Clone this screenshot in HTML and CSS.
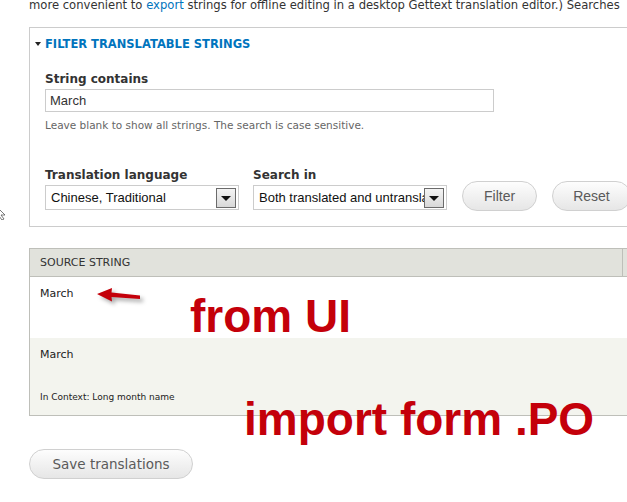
FILE: index.html
```html
<!DOCTYPE html>
<html lang="en">
<head>
    <meta charset="UTF-8">
    <title>Translate interface</title>
    <link rel="stylesheet" href="styles.css">
</head>
<body>
    <div class="page">
        <p class="intro">more convenient to <a href="#">export</a> strings for offline editing in a desktop Gettext translation editor.) Searches</p>

        <div class="filter">
            <div class="legend"><span class="caret"></span>Filter translatable strings</div>

            <div class="field">
                <label>String contains</label>
                <input class="text" type="text" value="March">
                <div class="desc">Leave blank to show all strings. The search is case sensitive.</div>
            </div>

            <div class="row">
                <div class="field">
                    <label>Translation language</label>
                    <div class="select"><span>Chinese, Traditional</span><i></i></div>
                </div>
                <div class="field">
                    <label>Search in</label>
                    <div class="select"><span>Both translated and untranslated strings</span><i></i></div>
                </div>
                <button class="btn">Filter</button>
                <button class="btn">Reset</button>
            </div>
        </div>

        <table class="strings">
            <thead>
                <tr><th>Source string</th><th></th></tr>
            </thead>
            <tbody>
                <tr class="odd"><td>March</td><td></td></tr>
                <tr class="even"><td>March<div class="context">In Context: Long month name</div></td><td></td></tr>
            </tbody>
        </table>

        <button class="btn save">Save translations</button>

        <!-- annotations drawn over the screenshot -->
        <svg class="arrow" width="60" height="22" viewBox="0 0 60 22">
            <path d="M3 6 L18 0 L17.5 4.5 L46 7.5 L46 11 L17.5 9 L18 13.5 Z" fill="#c4000a"/>
        </svg>
        <div class="note note-ui">from UI</div>
        <div class="note note-po">import form .PO</div>

        <svg class="cursor" width="8" height="16" viewBox="0 0 8 16">
            <path d="M-6 0 L5 11 L1 11 L4 15 L2 16 L-1 12 L-6 15 Z" fill="#fff" stroke="#555" stroke-width="0.8"/>
        </svg>
    </div>
</body>
</html>
```

FILE: styles.css
```css
body {
    margin: 0;
    background: #fff;
    overflow: hidden;
    font-family: "DejaVu Sans", Verdana, sans-serif;
    font-size: 11px;
    color: #333;
}
.page {
    position: relative;
    width: 660px;
    height: 502px;
    padding-left: 29px;
}
.intro {
    margin: -4px 0 0;
    line-height: 18px;
    white-space: nowrap;
    font-size: 11.6px;
    color: #333;
}
.intro a {
    color: #0074bd;
    text-decoration: none;
}
.filter {
    margin-top: 13px;
    border: 1px solid #ccc;
    padding: 9px 0 16px 15px;
}
.legend {
    margin-left: -11px;
    line-height: 14px;
    font-weight: bold;
    font-size: 11.5px;
    color: #0074bd;
    text-transform: uppercase;
}
.caret {
    display: inline-block;
    width: 0;
    height: 0;
    border-left: 3px solid transparent;
    border-right: 3px solid transparent;
    border-top: 4px solid #222;
    margin: 0 4px 2px 1px;
    vertical-align: middle;
}
.field {
    display: flex;
    flex-direction: column;
}
.filter > .field {
    margin-top: 21px;
}
label {
    font-weight: bold;
    font-size: 12px;
    line-height: 14px;
    color: #333;
    margin-bottom: 3px;
}
.text {
    box-sizing: border-box;
    width: 449px;
    height: 23px;
    margin: 0;
    border: 1px solid #ccc;
    padding: 2px 4px;
    font-family: "Liberation Sans", Arial, sans-serif;
    font-size: 13px;
    color: #333;
}
.desc {
    margin-top: 6px;
    line-height: 14px;
    font-size: 10.5px;
    color: #666;
}
.row {
    display: flex;
    align-items: flex-end;
    margin-top: 36px;
}
.row .field {
    margin-right: 14px;
}
.select {
    box-sizing: border-box;
    width: 194px;
    height: 25px;
    border: 1px solid #ccc;
    display: flex;
    align-items: center;
    padding-left: 5px;
    font-family: "Liberation Sans", Arial, sans-serif;
    font-size: 13px;
    color: #111;
    overflow: hidden;
}
.select span {
    flex: 1;
    white-space: nowrap;
    overflow: hidden;
}
.select i {
    position: relative;
    box-sizing: border-box;
    flex: none;
    width: 20px;
    height: 20px;
    margin-right: 2px;
    border: 1px solid #6b6b6b;
    background: linear-gradient(#f4f4f4, #d8d8d8);
}
.select i::after {
    content: "";
    position: absolute;
    left: 4px;
    top: 7px;
    border-left: 5px solid transparent;
    border-right: 5px solid transparent;
    border-top: 5px solid #111;
}
.btn {
    box-sizing: border-box;
    height: 30px;
    margin: 0 14px -1px 1px;
    padding: 0 21px;
    border: 1px solid #d0d0d0;
    border-radius: 15px;
    background: linear-gradient(#fdfdfd, #e6e6e6);
    font-family: "Liberation Sans", Arial, sans-serif;
    font-size: 14px;
    color: #5a5a5a;
}
.row .btn:last-child {
    padding: 0 20px;
}
.strings {
    margin-top: 21px;
    width: 640px;
    border-collapse: collapse;
    border-left: 1px solid #bebfb9;
    border-top: 1px solid #bebfb9;
    border-bottom: 1px solid #bebfb9;
}
.strings th {
    height: 27px;
    padding: 0 10px;
    text-align: left;
    font-weight: normal;
    font-size: 11px;
    text-transform: uppercase;
    color: #333;
    background: #e1e2dc;
    border-bottom: 1px solid #bebfb9;
}
.strings th:first-child {
    width: 572px;
    border-right: 1px solid #bebfb9;
}
.strings td {
    vertical-align: top;
    padding: 10px 10px 0;
    font-size: 11px;
    color: #222;
}
.strings .odd td {
    height: 51px;
    background: #fff;
}
.strings .even td {
    height: 67px;
    background: #f3f4ee;
}
.context {
    margin-top: 31px;
    font-size: 9px;
}
.save {
    margin: 33px 0 0;
    width: 164px;
    height: 30px;
    padding: 0;
    font-family: "DejaVu Sans", Verdana, sans-serif;
    font-size: 13.5px;
}
.note {
    position: absolute;
    font-family: "Liberation Sans", Arial, sans-serif;
    font-weight: bold;
    font-size: 46px;
    line-height: 46px;
    color: #c4000a;
    white-space: nowrap;
}
.note-ui {
    left: 190px;
    top: 297px;
}
.note-po {
    left: 244px;
    top: 400px;
}
.arrow {
    position: absolute;
    left: 94px;
    top: 292px;
    filter: drop-shadow(3px 3px 2px rgba(0, 0, 0, 0.35));
}
.cursor {
    position: absolute;
    left: 0;
    top: 208px;
}
```
